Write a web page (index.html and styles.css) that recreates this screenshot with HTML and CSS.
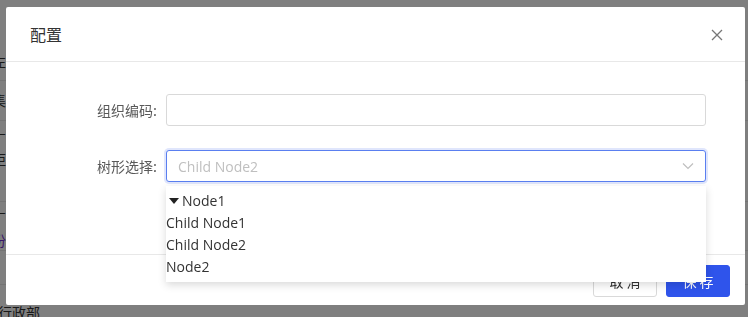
FILE: index.html
```html
<!DOCTYPE HTML>
<html>
    <head>
        <meta http-equiv="Content-Type" content="text/html; charset=UTF-8"/>
        <title>配置</title>
        <link rel="stylesheet" href="styles.css">
    </head>
    <body>
        <div class="page">
            <div class="row r1"><span>左</span></div>
            <div class="row r2"><span>集</span></div>
            <div class="row r3"><span>厂</span><span>距</span></div>
            <div class="row r4"><span>厂</span><span class="link">份</span></div>
            <div class="row r5"></div>
            <div class="row r6"><span>行政部</span></div>
        </div>
        <div class="mask"></div>
        <div class="modal">
            <div class="modal-header">
                <span class="modal-title">配置</span>
                <svg class="close" width="12" height="12" viewBox="0 0 12 12">
                    <path d="M1 1L11 11M11 1L1 11" stroke="#777" stroke-width="1.3" fill="none"/>
                </svg>
            </div>
            <div class="modal-body">
                <div class="form-item">
                    <label>组织编码:</label>
                    <div class="input"></div>
                </div>
                <div class="form-item">
                    <label>树形选择:</label>
                    <div class="select">
                        <span class="placeholder">Child Node2</span>
                        <svg class="arrow" width="12" height="8" viewBox="0 0 12 8">
                            <path d="M1 1.5L6 6.5L11 1.5" stroke="#bfbfbf" stroke-width="1.2" fill="none"/>
                        </svg>
                        <div class="dropdown">
                            <div class="node"><span class="caret"></span>Node1</div>
                            <div class="node">Child Node1</div>
                            <div class="node">Child Node2</div>
                            <div class="node">Node2</div>
                        </div>
                    </div>
                </div>
            </div>
            <div class="modal-footer">
                <button class="btn">取 消</button>
                <button class="btn primary">保 存</button>
            </div>
        </div>
    </body>
</html>
```

FILE: styles.css
```css
html, body{
    margin:0;
    padding:0;
    width:748px;
    height:317px;
    overflow:hidden;
    background:#fff;
    font-family:"Open Sans", "Noto Sans CJK SC", sans-serif;
}
.page{
    margin-left:-8px;
    font-size:14px;
    color:#333;
}
.row{
    border-bottom:1px solid #e8e8e8;
    display:flex;
    flex-direction:column;
    line-height:20px;
}
.r1{ height:80px; justify-content:flex-end; }
.r1 span{ margin-bottom:8px; }
.r2{ height:39px; justify-content:center; }
.r3{ height:81px; padding-top:9px; box-sizing:border-box; }
.r4{ height:49px; padding-top:7px; box-sizing:border-box; gap:2px; }
.r5{ height:33px; }
.r6{ height:40px; justify-content:flex-end; border:none; }
.r6 span{ margin-left:6px; margin-bottom:2px; }
.link{ color:#722ed1; }
.mask{
    position:fixed;
    left:0;
    top:0;
    right:0;
    bottom:0;
    background:rgba(0,0,0,0.5);
}
.modal{
    position:absolute;
    left:6px;
    top:7px;
    width:739px;
    height:298px;
    background:#fff;
    border-radius:2px;
    display:flex;
    flex-direction:column;
}
.modal-header{
    height:55px;
    box-sizing:border-box;
    padding:0 22px 0 24px;
    border-bottom:1px solid #e8e8e8;
    display:flex;
    align-items:center;
    justify-content:space-between;
}
.modal-title{
    font-family:"Noto Sans CJK SC", sans-serif;
    font-size:16px;
    color:#333;
}
.close{
    margin-top:1px;
}
.modal-body{
    flex:1;
    padding:32px 39px 0 0;
    display:flex;
    flex-direction:column;
    gap:24px;
}
.form-item{
    display:flex;
    align-items:center;
}
.form-item label{
    width:151px;
    margin-right:9px;
    text-align:right;
    font-family:"Noto Sans CJK SC", sans-serif;
    font-size:14px;
    color:#595959;
}
.input, .select{
    flex:1;
    height:32px;
    box-sizing:border-box;
    border:1px solid #d9d9d9;
    border-radius:3px;
    background:#fff;
}
.select{
    position:relative;
    border-color:#5a7ff0;
    box-shadow:0 0 0 2px rgba(47,84,235,0.15);
    display:flex;
    align-items:center;
    padding:0 11px;
}
.placeholder{
    flex:1;
    font-size:14px;
    color:#bfbfbf;
}
.dropdown{
    position:absolute;
    left:-1px;
    right:-1px;
    top:35px;
    padding:4px 0;
    background:#fff;
    box-shadow:0 3px 8px rgba(0,0,0,0.15);
    z-index:2;
}
.node{
    line-height:22px;
    font-size:14px;
    color:#333;
}
.caret{
    display:inline-block;
    width:0;
    height:0;
    margin:0 3px 0 3px;
    border-left:5px solid transparent;
    border-right:5px solid transparent;
    border-top:6px solid #222;
    vertical-align:middle;
    position:relative;
    top:-1px;
}
.modal-footer{
    height:51px;
    box-sizing:border-box;
    border-top:1px solid #e8e8e8;
    padding:10px 15px 0 0;
    display:flex;
    justify-content:flex-end;
    gap:9px;
}
.btn{
    width:64px;
    height:32px;
    border:1px solid #d9d9d9;
    border-radius:3px;
    background:#fff;
    color:#333;
    font-family:"Noto Sans CJK SC", sans-serif;
    font-size:14px;
    padding:0;
}
.btn.primary{
    background:#2f54eb;
    border-color:#2f54eb;
    color:#fff;
}
```
